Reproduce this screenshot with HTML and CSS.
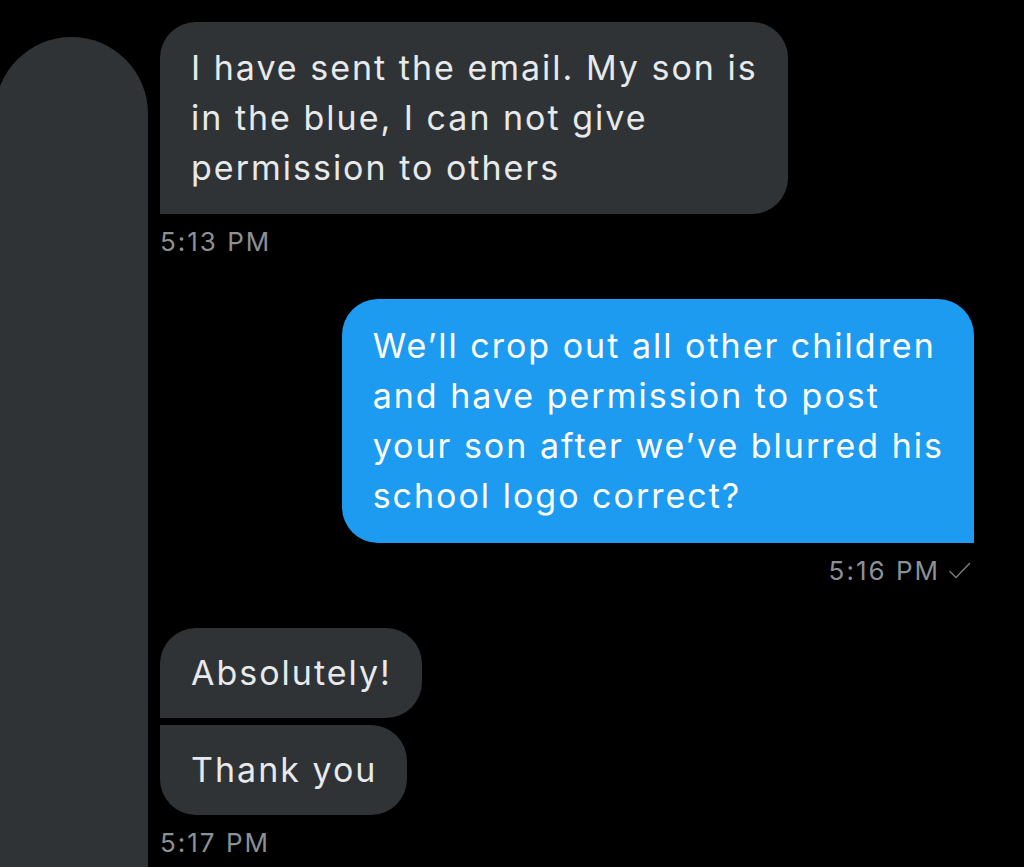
FILE: index.html
```html
<!DOCTYPE html>
<html>
<head>
  <meta charset="UTF-8">
  <title>Messages</title>
  <link rel="stylesheet" href="styles.css">
</head>
<body>
  <div class="chat">
    <div class="avatar"></div>

    <div class="thread">
      <div class="group incoming">
        <div class="bubble first last">I have sent the email. My son is<br>in the blue, I can not give<br>permission to others</div>
        <div class="time">5:13 PM</div>
      </div>

      <div class="group outgoing">
        <div class="bubble first last">We’ll crop out all other children<br>and have permission to post<br>your son after we’ve blurred his<br>school logo correct?</div>
        <div class="time">5:16 PM
          <svg class="tick" width="24" height="20" viewBox="0 0 24 20"><path d="M2 10.5 L8 16.5 L21.5 2.5" fill="none" stroke="currentColor" stroke-width="1.6" stroke-linecap="round" stroke-linejoin="round"/></svg>
        </div>
      </div>

      <div class="group incoming">
        <div class="bubble first single">Absolutely!</div>
        <div class="bubble last single">Thank you</div>
        <div class="time">5:17 PM</div>
      </div>
    </div>
  </div>
</body>
</html>
```

FILE: styles.css
```css
body {
  margin: 0;
  background-color: #000;
  font-family: "Inter", "Noto Sans", sans-serif;
  overflow: hidden;
}
.chat {
  display: flex;
  height: 867px;
  overflow: hidden;
}
.avatar {
  flex: 0 0 153px;
  height: 900px;
  margin-left: -5px;
  margin-top: 37px;
  background-color: #2f3336;
  border-radius: 77px 77px 0 0;
}
.thread {
  flex: 1;
  display: flex;
  flex-direction: column;
  padding: 22px 50px 0 12px;
}
.group {
  display: flex;
  flex-direction: column;
  gap: 7px;
}
.incoming {
  align-items: flex-start;
}
.outgoing {
  align-items: flex-end;
  margin-top: 42px;
}
.incoming + .outgoing + .incoming {
  margin-top: 42px;
}
.bubble {
  padding: 21px 30px 21px 31px;
  font-size: 34px;
  line-height: 50px;
  letter-spacing: 2px;
  border-radius: 36px;
}
.bubble.single {
  padding-top: 20px;
  padding-bottom: 20px;
}
.incoming .bubble {
  background-color: #2f3336;
  color: #e7e9ea;
}
.incoming .bubble.first {
  border-bottom-left-radius: 0;
}
.incoming .bubble.last {
  border-top-left-radius: 0;
}
.incoming .bubble.first.last {
  border-top-left-radius: 36px;
}
.outgoing .bubble {
  background-color: #1d9bf0;
  color: #fff;
  padding-top: 22px;
  padding-bottom: 22px;
  border-bottom-right-radius: 0;
}
.time {
  margin-top: 6px;
  font-size: 26px;
  line-height: 30px;
  letter-spacing: 2px;
  color: #8b9095;
  display: flex;
  align-items: center;
  gap: 8px;
}
.tick {
  color: #71767b;
  margin-right: 2px;
}
```
